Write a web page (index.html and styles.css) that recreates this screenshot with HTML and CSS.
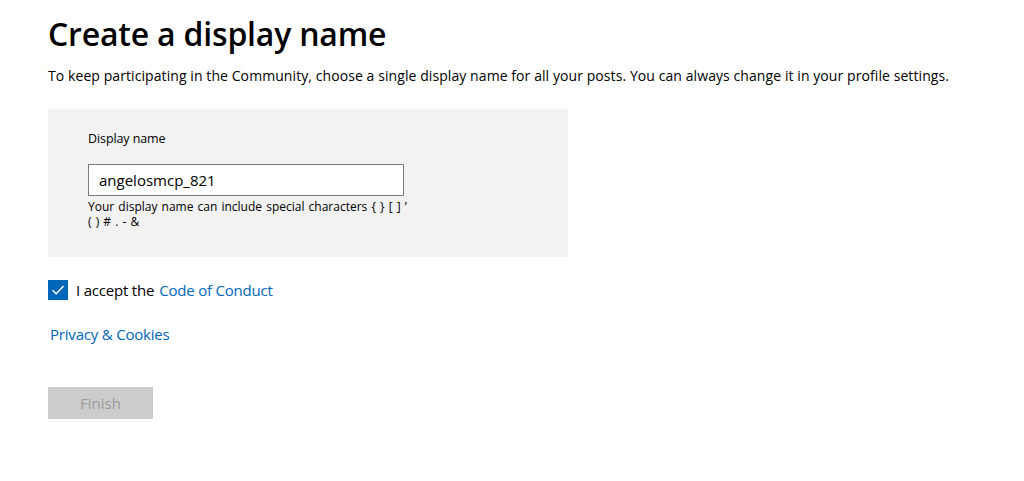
FILE: index.html
```html
<!DOCTYPE html>
<html lang="en">
<head>
<meta charset="utf-8">
<title>Create a display name</title>
<link rel="stylesheet" href="styles.css">
</head>
<body>
<main class="page">
  <h1 class="title">Create a display name</h1>
  <p class="intro">To keep participating in the Community, choose a single display name for all your posts. You can always change it in your profile settings.</p>
  <section class="panel">
    <label class="label" for="dn">Display name</label>
    <input class="input" id="dn" type="text" value="angelosmcp_821">
    <p class="hint">Your display name can include special characters { } [ ] ’ ( ) # . - &amp;</p>
  </section>
  <div class="accept">
    <span class="check"><svg width="20" height="20" viewBox="0 0 20 20"><path d="M4.5 10.2 L8.2 13.8 L15.5 6" fill="none" stroke="#fff" stroke-width="1.4"/></svg></span>
    <span class="accept-text">I accept the</span>
    <a class="link" href="#">Code of Conduct</a>
  </div>
  <a class="link privacy" href="#">Privacy &amp; Cookies</a>
  <button class="finish" disabled>Finish</button>
</main>
</body>
</html>
```
FILE: styles.css
```css
html, body { margin: 0; padding: 0; background: #fff; }
body { font-family: "Open Sans", "Noto Sans", sans-serif; color: #000; }
.page { padding: 14px 48px 0 48px; display: flex; flex-direction: column; align-items: flex-start; }
.title { margin: 0; font-size: 32px; font-weight: 600; line-height: 40px; letter-spacing: -0.2px; }
.intro { margin: 12px 0 0 0; font-size: 14px; line-height: 20px; letter-spacing: 0.08px; }
.panel { margin-top: 23px; width: 520px; box-sizing: border-box; background: #f2f2f2; padding: 21px 40px 28px 40px; display: flex; flex-direction: column; }
.label { font-size: 12.5px; line-height: 18px; letter-spacing: -0.1px; }
.input { margin-top: 16px; width: 316px; height: 32px; box-sizing: border-box; border: 1px solid #7a7a7a; border-radius: 0; padding: 0 10px; font-family: inherit; font-size: 15px; color: #000; background: #fff; outline: none; }
.hint { margin: 3px 0 0 0; width: 324px; font-size: 12px; line-height: 15px; word-spacing: 1px; }
.accept { margin-top: 22px; display: flex; align-items: center; height: 22px; font-size: 15px; }
.check { width: 20px; height: 20px; background: #0067b8; display: inline-flex; }
.accept-text { margin-left: 8px; letter-spacing: -0.2px; }
.link { color: #0067b8; text-decoration: none; letter-spacing: -0.2px; }
.accept .link { margin-left: 5px; }
.privacy { margin: 22px 0 0 2px; font-size: 15px; line-height: 22px; }
.finish { margin-top: 42px; width: 105px; height: 32px; border: none; background: #cccccc; color: #9a9a9a; font-family: inherit; font-size: 15px; padding: 0; }
```
